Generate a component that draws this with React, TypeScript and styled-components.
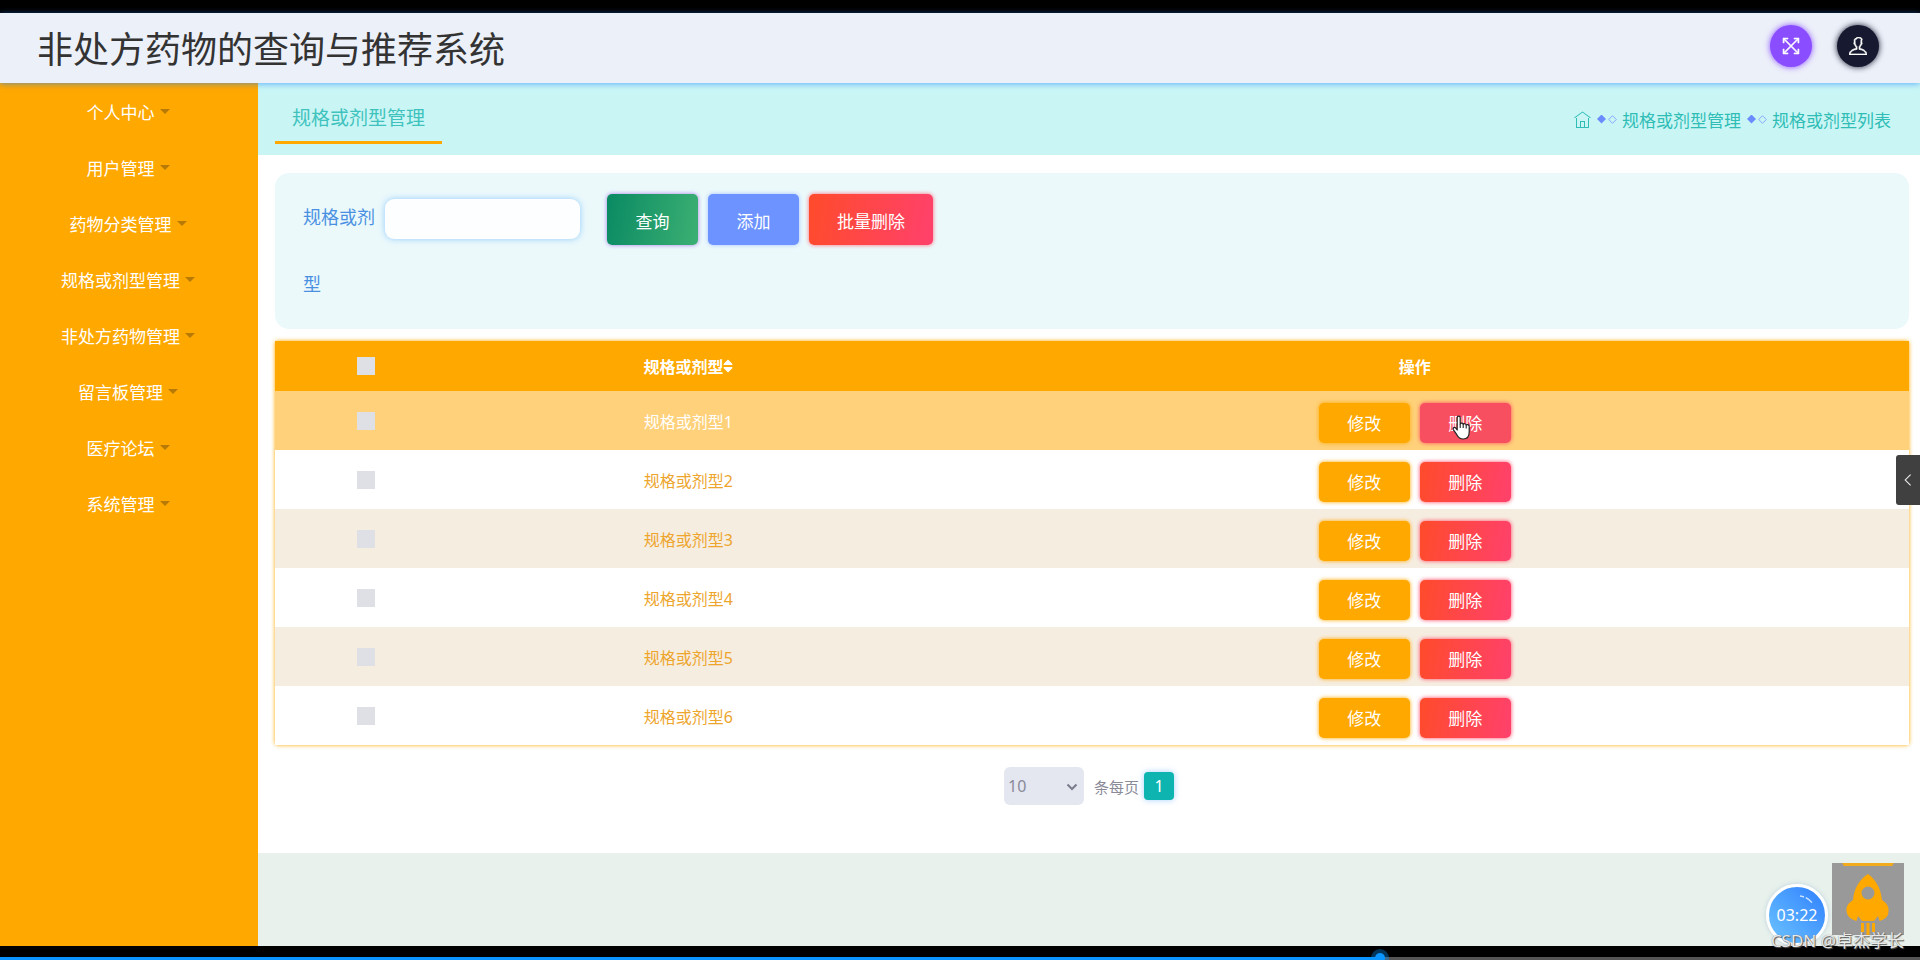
import React from 'react';
import styled, { createGlobalStyle } from 'styled-components';
import { TfiAngleLeft, TfiFullscreen, TfiHome, TfiUser } from 'react-icons/tfi';
import { FaSort } from 'react-icons/fa';

const ORANGE = '#ffa800';

const GlobalStyle = createGlobalStyle`
  *, *::before, *::after { box-sizing: border-box; }
  body {
    margin: 0;
    background: #000;
    font-family: "Noto Sans", "Noto Sans CJK SC", sans-serif;
    font-size: 17px;
  }
  button, input, select { font: inherit; }
`;

const Screen = styled.div`
  position: relative;
  display: flex;
  flex-direction: column;
  min-height: 100vh;
  padding-top: 13px;
  overflow: hidden;
`;

const Header = styled.header`
  position: relative;
  z-index: 1;
  display: flex;
  align-items: center;
  justify-content: space-between;
  height: 70px;
  padding: 0 41px 0 37px;
  background: #ecf0f9;
  box-shadow: 0 1px 6px rgba(30, 130, 255, 0.6);
`;

const Title = styled.h1`
  margin: 0;
  padding-top: 4px;
  color: #333;
  font-size: 36px;
  font-weight: 400;
  line-height: 66px;
`;

const HeaderTools = styled.div`
  display: flex;
  gap: 25px;
  padding-bottom: 5px;
`;

const RoundButton = styled.button<{ $color: string }>`
  display: grid;
  place-items: center;
  width: 42px;
  height: 42px;
  padding: 0;
  border: 0;
  border-radius: 50%;
  background: ${(p) => p.$color};
  box-shadow: 0 0 6px ${(p) => p.$color};
  color: #fff;
  font-size: 18px;

  svg {
    stroke: currentColor;
    stroke-width: 0.6;
  }
`;

const Body = styled.div`
  display: flex;
  flex: 1;
`;

const Sidebar = styled.nav`
  flex: none;
  width: 258px;
  background: ${ORANGE};
`;

const Menu = styled.ul`
  margin: 0;
  padding: 0;
  list-style: none;
`;

const MenuLink = styled.a`
  display: flex;
  align-items: center;
  justify-content: center;
  gap: 5px;
  height: 56px;
  padding-right: 2px;
  color: #fff;
  text-decoration: none;

  &::after {
    content: "";
    border: 5px solid transparent;
    border-top-color: #b87a06;
    border-bottom-width: 0;
  }
`;

const Main = styled.main`
  display: flex;
  flex: 1;
  flex-direction: column;
  min-width: 0;
  background: #fff;
`;

const TopBar = styled.div`
  display: flex;
  align-items: center;
  justify-content: space-between;
  height: 72px;
  padding: 0 29px 0 17px;
  background: #c9f6f5;
`;

const PageTab = styled.h2`
  margin: 0;
  padding: 0 17px;
  border-bottom: 3px solid ${ORANGE};
  color: #3fc2bd;
  font-size: 19px;
  font-weight: 400;
  line-height: 46px;
`;

const Crumbs = styled.ol`
  display: flex;
  align-items: center;
  margin: 0;
  padding: 0;
  list-style: none;
`;

const Crumb = styled.li`
  display: flex;
  align-items: center;

  & + &::before {
    content: "";
    width: 9px;
    height: 9px;
    margin: 0 2px 0 6px;
    background: #6b8cff;
    clip-path: polygon(50% 0, 100% 50%, 50% 100%, 0 50%);
  }
`;

const CrumbLink = styled.a`
  display: flex;
  color: #2fbdb5;
  text-decoration: none;
`;

const Hollow = styled.svg`
  width: 9px;
  height: 9px;
  margin-right: 5px;
`;

const Content = styled.div`
  flex: 1;
  padding: 18px 11px 0 17px;
`;

const SearchPanel = styled.form`
  display: flex;
  align-items: flex-start;
  min-height: 156px;
  padding: 11px 28px;
  border-radius: 14px;
  background: #ebf9fb;
`;

const SearchLabel = styled.label`
  width: 82px;
  padding-right: 8px;
  color: #4a90e2;
  font-size: 18px;
  line-height: 67px;
`;

const SearchInput = styled.input`
  width: 195px;
  height: 40px;
  margin: 15px 27px 0 0;
  padding: 0 12px;
  border: 0;
  border-radius: 9px;
  background: #fcfeff;
  box-shadow: 0 0 6px rgba(60, 160, 255, 0.5);
`;

const SearchActions = styled.div`
  display: flex;
  gap: 10px;
  padding-top: 10px;
`;

const ActionButton = styled.button<{ $fill: string; $glow: string; $small?: boolean }>`
  min-width: 91px;
  height: ${(p) => (p.$small ? 40 : 51)}px;
  padding: ${(p) => (p.$small ? 0 : 2)}px 28px 0;
  border: 0;
  border-radius: 5px;
  background: ${(p) => p.$fill};
  box-shadow: 0 0 4px ${(p) => p.$glow};
  color: #fff;
`;

const RED_FILL = 'linear-gradient(100deg, #ff4b2b, #ff416c)';

const DataTable = styled.table`
  width: 100%;
  margin-top: 12px;
  border-collapse: collapse;
  border-radius: 3px;
  box-shadow: 0 0 4px ${ORANGE};
  font-size: 16px;
  table-layout: fixed;
  text-align: center;
`;

const HeadCell = styled.th<{ $width?: string }>`
  width: ${(p) => p.$width ?? 'auto'};
  height: 50px;
  padding: 0;
  background: ${ORANGE};
  color: #fff;
`;

const HeadLabel = styled.span`
  display: inline-flex;
  align-items: center;

  svg {
    margin: 0 -3px;
  }
`;

const Row = styled.tr<{ $active: boolean }>`
  height: 59px;
  background: ${(p) => (p.$active ? '#ffd17a' : '#fff')};
  color: ${(p) => (p.$active ? '#fff' : '#eda52c')};

  &:nth-child(odd) {
    background: ${(p) => (p.$active ? '#ffd17a' : '#f6ede1')};
  }
`;

const Cell = styled.td`
  padding: 0;
`;

const Tick = styled.input`
  display: block;
  width: 18px;
  height: 18px;
  margin: 0 auto;
  appearance: none;
  background: #dee0e6;
`;

const RowActions = styled.div`
  display: flex;
  justify-content: center;
  gap: 10px;
  padding-top: 4px;
  font-size: 17px;
`;

const Pointed = styled.span`
  position: relative;
  display: flex;
`;

const Pointer = styled.svg`
  position: absolute;
  top: 12px;
  left: 31px;
  width: 20px;
  height: 25px;
`;

const Pager = styled.div`
  display: flex;
  align-items: center;
  justify-content: center;
  margin-top: 22px;
  padding-right: 6px;
  color: #8a8a99;
  font-size: 15px;
`;

const SelectBox = styled.span`
  position: relative;
  color: #7c7c8c;
`;

const PageSize = styled.select`
  display: block;
  width: 80px;
  height: 38px;
  padding: 0 4px;
  appearance: none;
  border: 0;
  border-radius: 6px;
  background: #e4e6f0;
  color: #8a8a99;
  font-size: 16px;
`;

const Chevron = styled.svg`
  position: absolute;
  top: 16px;
  right: 6px;
  width: 12px;
  height: 8px;
  pointer-events: none;
`;

const PagerLabel = styled.label`
  margin: 0 5px 0 10px;
`;

const PageButton = styled.button`
  width: 30px;
  height: 28px;
  padding: 0;
  border: 0;
  border-radius: 4px;
  background: #0eb5b0;
  box-shadow: 0 0 6px rgba(107, 180, 255, 0.6);
  color: #fff;
  font-size: 16px;
  line-height: 28px;
`;

const Footer = styled.footer`
  height: 93px;
  background: #e8f1ec;
`;

const Player = styled.div`
  position: relative;
  z-index: 1;
  height: 14px;
  padding-top: 11px;
  background: #000;
`;

const Track = styled.div`
  height: 3px;
  background: #555;
`;

const Played = styled.div`
  position: relative;
  width: 72%;
  height: 3px;
  background: #0a94ff;

  &::after {
    content: "";
    position: absolute;
    top: -4px;
    right: -3px;
    width: 10px;
    height: 10px;
    border-radius: 50%;
    background: #0a94ff;
    box-shadow: 0 0 0 4px rgba(10, 148, 255, 0.35);
  }
`;

const SideToggle = styled.button`
  position: absolute;
  top: 455px;
  right: 0;
  display: grid;
  place-items: center;
  width: 24px;
  height: 50px;
  padding: 0;
  border: 0;
  border-radius: 3px 0 0 3px;
  background: #404040;
  color: #fff;
  font-size: 12px;

  svg {
    stroke: currentColor;
    stroke-width: 0.5;
  }
`;

const BackToTop = styled.button`
  position: absolute;
  right: 16px;
  bottom: 25px;
  width: 72px;
  height: 72px;
  padding: 0;
  border: 0;
  background: #999;
`;

const Clock = styled.div`
  position: absolute;
  right: 92px;
  bottom: 14px;
  display: grid;
  place-items: center;
  width: 62px;
  height: 62px;
  border: 3px solid #fff;
  border-radius: 50%;
  background: linear-gradient(45deg, #6cc4ff, #2f80ff);
  box-shadow: 0 0 5px rgba(120, 160, 200, 0.4);
  color: #fff;
  font-size: 16px;
`;

const Glint = styled.svg`
  position: absolute;
  top: 7px;
  right: 10px;
  width: 16px;
  height: 12px;
`;

const Watermark = styled.span`
  position: absolute;
  z-index: 2;
  right: 16px;
  bottom: 7px;
  color: rgba(255, 255, 255, 0.85);
  line-height: 24px;
  text-shadow: 1px 1px 1px #555, 0 0 1px #777;
  white-space: nowrap;
`;

const menuItems = [
  '个人中心',
  '用户管理',
  '药物分类管理',
  '规格或剂型管理',
  '非处方药物管理',
  '留言板管理',
  '医疗论坛',
  '系统管理',
];

const specs = [1, 2, 3, 4, 5, 6].map((n) => `规格或剂型${n}`);
const hovered = 0;

function HollowDiamond() {
  return (
    <Hollow viewBox="0 0 9 9" aria-hidden="true">
      <path d="M4.5 .7 8.300 4.5 4.5 8.300 .7 4.5Z" fill="none" stroke="#8aa4fb" />
    </Hollow>
  );
}

function HandPointer() {
  return (
    <Pointer viewBox="0 0 20 25" aria-hidden="true">
      <path
        d="M6.2 15V2.8C6.2.5 9.2.5 9.2 2.8V9c.3-1.400 2.900-1.300 3 .5.5-1.300 2.900-1 3 .7.700-1.100 2.900-.7 3 1.100V17c0 4.500-2.500 7-6 7-3.300 0-4.800-1.300-6.400-4.300L2.300 14.600c-.9-1.900 1.300-2.900 2.500-1.400Z"
        fill="#fff"
        stroke="#222"
        strokeWidth="1.200"
        strokeLinejoin="round"
      />
      <path d="M9.200 9v4M12.200 9.500V13M15.200 10.200V13.500" stroke="#222" strokeWidth="1.100" />
    </Pointer>
  );
}

function Rocket() {
  return (
    <svg width="72" height="72" viewBox="0 0 72 72" aria-hidden="true">
      <path d="M10 0H62L60 3H12Z" fill="#f2ab1c" />
      <path
        fill={ORANGE}
        fillRule="evenodd"
        d="M36 11C28 16 22 25 21 37C16 40 14 44 14.500 48C15 53 18 56 24.500 58L26 53L30 58H42L46 53L47.500 58C54 56 56.500 53 56.500 48C57 44 55 40 50 37C49 25 43 16 36 11ZM36 23.500A6.500 6.500 0 1 1 36 36.500A6.500 6.500 0 1 1 36 23.500Z"
      />
      <path d="M30.500 60V69M36 60V72M41.500 60V69" stroke={ORANGE} strokeWidth="3" />
    </svg>
  );
}

export default function App() {
  return (
    <Screen>
      <GlobalStyle />
      <Header>
        <Title>非处方药物的查询与推荐系统</Title>
        <HeaderTools>
          <RoundButton type="button" $color="#8a4dff" aria-label="全屏">
            <TfiFullscreen />
          </RoundButton>
          <RoundButton type="button" $color="#16192f" aria-label="用户">
            <TfiUser />
          </RoundButton>
        </HeaderTools>
      </Header>

      <Body>
        <Sidebar>
          <Menu>
            {menuItems.map((item) => (
              <li key={item}>
                <MenuLink href="#">{item}</MenuLink>
              </li>
            ))}
          </Menu>
        </Sidebar>

        <Main>
          <TopBar>
            <PageTab>规格或剂型管理</PageTab>
            <Crumbs>
              <Crumb>
                <CrumbLink href="#" aria-label="首页">
                  <TfiHome />
                </CrumbLink>
              </Crumb>
              <Crumb>
                <HollowDiamond />
                <CrumbLink href="#">规格或剂型管理</CrumbLink>
              </Crumb>
              <Crumb>
                <HollowDiamond />
                <CrumbLink href="#">规格或剂型列表</CrumbLink>
              </Crumb>
            </Crumbs>
          </TopBar>

          <Content>
            <SearchPanel onSubmit={(e) => e.preventDefault()}>
              <SearchLabel htmlFor="spec">规格或剂型</SearchLabel>
              <SearchInput id="spec" type="text" />
              <SearchActions>
                <ActionButton $fill="linear-gradient(100deg, #0a8a63, #3cb073)" $glow="#a97be8">
                  查询
                </ActionButton>
                <ActionButton type="button" $fill="#6c93ff" $glow="#a9c2ff">
                  添加
                </ActionButton>
                <ActionButton type="button" $fill={RED_FILL} $glow="#ff6a78">
                  批量删除
                </ActionButton>
              </SearchActions>
            </SearchPanel>

            <DataTable>
              <thead>
                <tr>
                  <HeadCell $width="11.1%">
                    <Tick type="checkbox" aria-label="全选" />
                  </HeadCell>
                  <HeadCell $width="28.4%">
                    <HeadLabel>
                      规格或剂型
                      <FaSort />
                    </HeadLabel>
                  </HeadCell>
                  <HeadCell>操作</HeadCell>
                </tr>
              </thead>
              <tbody>
                {specs.map((spec, i) => (
                  <Row key={spec} $active={i === hovered}>
                    <Cell>
                      <Tick type="checkbox" aria-label={spec} />
                    </Cell>
                    <Cell>{spec}</Cell>
                    <Cell>
                      <RowActions>
                        <ActionButton type="button" $small $fill={ORANGE} $glow={ORANGE}>
                          修改
                        </ActionButton>
                        <Pointed>
                          <ActionButton
                            type="button"
                            $small
                            $fill={i === hovered ? '#f84f60' : RED_FILL}
                            $glow="#ff4560"
                          >
                            删除
                          </ActionButton>
                          {i === hovered && <HandPointer />}
                        </Pointed>
                      </RowActions>
                    </Cell>
                  </Row>
                ))}
              </tbody>
            </DataTable>

            <Pager>
              <SelectBox>
                <PageSize id="page-size" defaultValue="10">
                  <option>10</option>
                  <option>25</option>
                  <option>50</option>
                </PageSize>
                <Chevron viewBox="0 0 12 8" aria-hidden="true">
                  <path d="M1.500 1.500 6 6l4.500-4.500" fill="none" stroke="currentColor" strokeWidth="2" />
                </Chevron>
              </SelectBox>
              <PagerLabel htmlFor="page-size">条每页</PagerLabel>
              <PageButton type="button">1</PageButton>
            </Pager>
          </Content>

          <Footer />
        </Main>
      </Body>

      <SideToggle type="button" aria-label="展开">
        <TfiAngleLeft />
      </SideToggle>
      <BackToTop type="button" aria-label="返回顶部">
        <Rocket />
      </BackToTop>
      <Clock>
        03:22
        <Glint viewBox="0 0 16 12" aria-hidden="true">
          <path d="M1 2Q9 3 14 10" fill="none" stroke="#cfe6ff" strokeWidth="1.500" strokeDasharray="4 2 8" />
        </Glint>
      </Clock>
      <Player>
        <Track>
          <Played />
        </Track>
      </Player>
      <Watermark>CSDN @卓杰学长</Watermark>
    </Screen>
  );
}
